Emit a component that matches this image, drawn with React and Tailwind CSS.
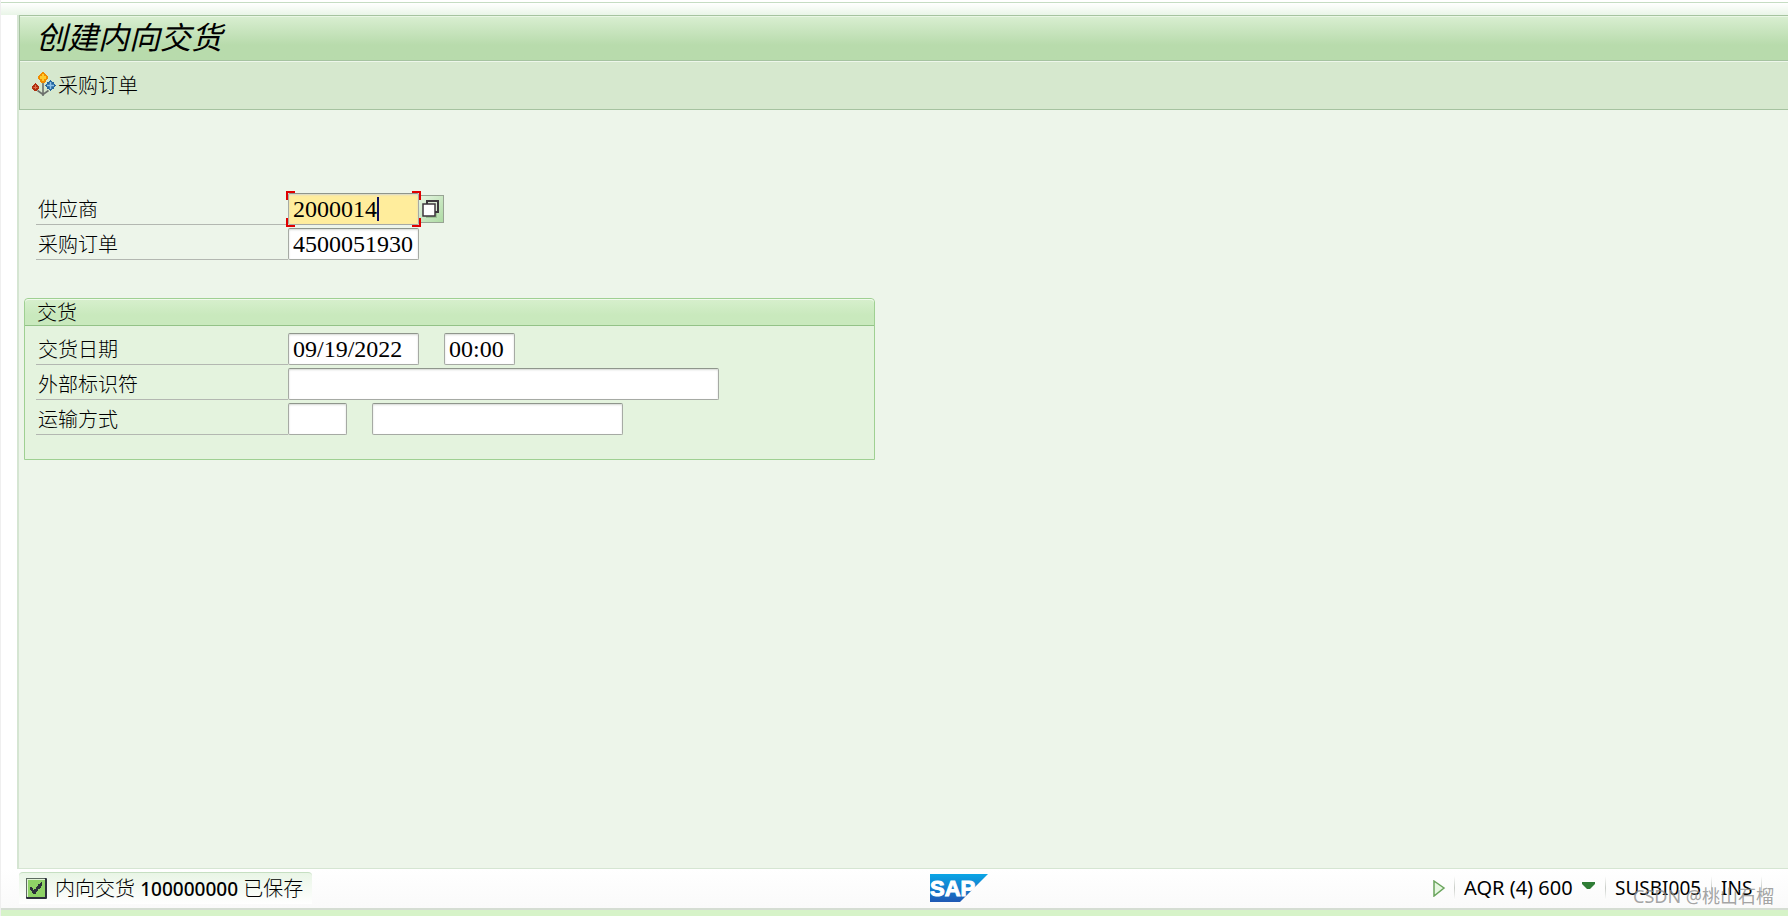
import React from "react";
import { useState } from "react";

const fieldStyle =
  "h-8 rounded-xs border border-[#a6aaa4] border-t-[#8f968c] pl-1 text-2xl leading-7 text-black outline-none shadow-[inset_0_1px_2px_#d5d8d4] font-['Liberation_Serif',serif]";

function OrderIcon() {
  return (
    <svg width="24" height="26" viewBox="0 0 24 26" fill="none">
      <path d="M11 11v13M5.500 18.500l5.500 4 5.500-4" stroke="#6b6f6b" strokeWidth="1.600" />
      <path d="M10 0h2v1h1v1h1v1h1v1h1v3h-1v1h-1v2h-1v1h-4v-1H8V8H7V7H6V4h1V3h1V2h1V1h1z" fill="#f08c00" />
      <path d="M10 2h2v2h2v3h-2v2h-2V7H8V4h2z" fill="#ffca2c" />
      <path d="M3 11h1v1h1v1h1v1h1v3H6v1H5v1H2v-1H1v-1H0v-3h1v-1h1v-1h1z" fill="#b0300f" />
      <path d="M3.500 13v4M1.500 15.500h4" stroke="#e0724c" />
      <path d="M18 8h1v1h1v1h2v2h1v1h1v1h-1v1h-1v2h-2v1h-1v1h-1v-1h-1v-1h-2v-2h-1v-1h-1v-1h1v-1h1v-2h2V9h1z" fill="#2466a0" />
      <path d="M18.500 10v7M15 13.500h7" stroke="#8fc2e8" strokeWidth="1.500" />
    </svg>
  );
}

function MatchIcon() {
  return (
    <svg width="18" height="19" viewBox="0 0 18 19" fill="none">
      <path d="M4 7h11v11H4z" fill="#9cc294" />
      <path d="M5 1h11v11H5z" fill="#dcebd7" stroke="#3c363c" strokeWidth="2" />
      <rect x="1" y="4" width="12" height="12" fill="#fff" stroke="#3c363c" strokeWidth="1.500" />
    </svg>
  );
}

function CheckIcon() {
  return (
    <svg width="21" height="21" viewBox="0 0 21 21">
      <rect width="21" height="21" rx="1" fill="#2c303c" />
      <rect width="19" height="19" rx="1" fill="#5d6b60" />
      <rect x="1" y="1" width="18" height="18" fill="#e2f3d8" />
      <rect x="2" y="2" width="17" height="17" fill="#8ed266" />
      <path d="M4 9h2v1h1v2h1v-1h2V9h1V8h1V6h2V5h1V4h1v4h-1v2h-1v1h-2v2h-1v1h-1v2H7v-1H6v-2H5v-1H4z" fill="#2c303c" />
    </svg>
  );
}

function SapLogo() {
  return (
    <svg width="58" height="28" viewBox="0 0 58 28">
      <defs>
        <linearGradient id="sap" x1="0" y1="0" x2="0" y2="1">
          <stop offset="0" stopColor="#0aa6e6" />
          <stop offset="1" stopColor="#1f58b4" />
        </linearGradient>
      </defs>
      <path d="M0 0h58L30 28H0z" fill="url(#sap)" />
      <text
        x="0"
        y="22"
        fontFamily="Liberation Sans, sans-serif"
        fontWeight="700"
        fontSize="22"
        fill="#fff"
        stroke="#fff"
        strokeWidth="1"
      >
        SAP
      </text>
    </svg>
  );
}

function Row({ id, label, children }) {
  return (
    <div className="flex h-8">
      <label
        htmlFor={id}
        className="flex w-[252px] shrink-0 items-center border-b border-[#b3b7b1] pl-[2px] text-xl leading-6"
      >
        {label}
      </label>
      {children}
    </div>
  );
}

function Divider() {
  return <div className="h-6 w-px bg-linear-to-b from-white via-[#c9cdc8] to-white"></div>;
}

export default function App() {
  const [form, setForm] = useState({
    vendor: "2000014",
    order: "4500051930",
    date: "09/19/2022",
    time: "00:00",
    external: "",
    transport: "",
    transportText: "",
  });

  const onChange = (e) => {
    setForm({ ...form, [e.target.id]: e.target.value });
  };

  return (
    <div className="flex min-h-screen flex-col border-l border-[#efefef] bg-white font-light text-black font-['Noto_Sans_CJK_SC',sans-serif]">
      <div className="mt-[2px] h-[13px] border-t border-[#c5dcc2] bg-linear-to-b from-white to-[#e9f5e7]"></div>

      <div className="ml-4 flex grow flex-col border-b border-l-2 border-[#d5e5d2] bg-[#edf5ea]">
        <header className="border-t border-l border-[#a6c3a0]">
          <div className="flex h-[45px] items-center border-t border-b border-t-[#e9f7e4] border-b-[#a6c3a0] bg-linear-to-b from-[#d8eed0] to-[#b8dbac] to-65% pb-[6px] pl-4">
            <h1 className="text-[31px] leading-9 font-normal italic">创建内向交货</h1>
          </div>
          <div className="flex h-[49px] items-center border-t border-b border-t-[#edf6ea] border-b-[#a6c3a0] bg-[#d6e8ce] pb-[2px] pl-3">
            <button className="flex items-center gap-[2px] text-xl leading-6">
              <OrderIcon />
              采购订单
            </button>
          </div>
        </header>

        <main className="grow pt-[83px] pl-[5px]">
          <div className="flex flex-col gap-[3px] pl-3">
            <Row id="vendor" label="供应商">
              <div className="relative">
                <input
                  id="vendor"
                  value={form.vendor}
                  onChange={onChange}
                  className={`${fieldStyle} w-[131px] bg-[#ffed9c]`}
                />
                <span className="absolute top-1 left-[89px] h-6 w-[2px] bg-[#0c1060]"></span>
                <span className="absolute -top-[2px] -left-[2px] h-[9px] w-[9px] border-t-2 border-l-2 border-[#e00000]"></span>
                <span className="absolute -top-[2px] -right-[2px] h-[9px] w-[9px] border-t-2 border-r-2 border-[#e00000]"></span>
                <span className="absolute -bottom-[2px] -left-[2px] h-[9px] w-[9px] border-b-2 border-l-2 border-[#e00000]"></span>
                <span className="absolute -right-[2px] -bottom-[2px] h-[9px] w-[9px] border-r-2 border-b-2 border-[#e00000]"></span>
              </div>
              <button
                aria-label="搜索帮助"
                className="mt-[2px] flex h-7 w-[25px] items-center border border-l-0 border-[#98a494] bg-linear-to-br from-[#e6f4e2] to-[#aedba4] pl-[3px]"
              >
                <MatchIcon />
              </button>
            </Row>
            <Row id="order" label="采购订单">
              <input
                id="order"
                value={form.order}
                onChange={onChange}
                className={`${fieldStyle} w-[131px] bg-white`}
              />
            </Row>
          </div>

          <section className="mt-[38px] h-[162px] w-[851px] rounded-t-sm border border-[#9fd092] bg-[#e4f3de]">
            <h2 className="flex h-[27px] items-center rounded-t-sm border-t border-b border-t-[#f0faec] border-b-[#93c287] bg-linear-to-b from-[#d6efcc] to-[#c9e9bd] to-60% pb-[2px] pl-3 text-xl leading-6 font-light">
              交货
            </h2>
            <div className="flex flex-col gap-[3px] pt-[7px] pl-[11px]">
              <Row id="date" label="交货日期">
                <input
                  id="date"
                  value={form.date}
                  onChange={onChange}
                  className={`${fieldStyle} w-[131px] bg-white`}
                />
                <input
                  id="time"
                  aria-label="交货时间"
                  value={form.time}
                  onChange={onChange}
                  className={`${fieldStyle} ml-[25px] w-[71px] bg-white`}
                />
              </Row>
              <Row id="external" label="外部标识符">
                <input
                  id="external"
                  value={form.external}
                  onChange={onChange}
                  className={`${fieldStyle} w-[431px] bg-white`}
                />
              </Row>
              <Row id="transport" label="运输方式">
                <input
                  id="transport"
                  value={form.transport}
                  onChange={onChange}
                  className={`${fieldStyle} w-[59px] bg-white`}
                />
                <input
                  id="transportText"
                  aria-label="运输方式说明"
                  value={form.transportText}
                  onChange={onChange}
                  className={`${fieldStyle} ml-[25px] w-[251px] bg-white`}
                />
              </Row>
            </div>
          </section>
        </main>
      </div>

      <footer className="relative flex h-[39px] items-center bg-linear-to-b from-white to-[#fafafa] pb-px font-['Noto_Sans','Noto_Sans_CJK_SC',sans-serif]">
        <div className="w-[52%] pl-[18px]">
          <div className="flex h-8 w-[293px] items-center rounded-t-sm border-t border-[#c6dfc2] bg-linear-to-b from-[#e9f5e6] to-white pl-[7px]">
            <CheckIcon />
            <p className="pl-2 text-xl leading-6 whitespace-nowrap">
              内向交货 <span className="text-[19px] font-medium">100000000</span> 已保存
            </p>
          </div>
        </div>
        <SapLogo />
        <div className="ml-auto flex items-center pr-[26px] text-[19px] leading-6 font-normal">
          <button aria-label="展开" className="mr-2">
            <svg width="13" height="17" viewBox="0 0 13 17">
              <path d="M1 1l10 7L1 16z" fill="#e6f7e0" stroke="#69a45c" strokeWidth="1.500" />
            </svg>
          </button>
          <Divider />
          <button className="flex w-[150px] items-center justify-between pr-[10px] pl-[9px] text-xl leading-6">
            AQR (4) 600
            <svg width="13" height="8" viewBox="0 0 13 8" className="mb-1">
              <path d="M0 0h13v2L8 7H5L0 2z" fill="#2f7d36" />
            </svg>
          </button>
          <Divider />
          <span className="w-[105px] pl-[9px]">SUSBI005</span>
          <Divider />
          <span className="w-[49px] pl-[9px]">INS</span>
          <Divider />
        </div>
        <span className="absolute right-[14px] bottom-0 text-lg leading-6 font-normal text-[#8c8c8c]/80">
          CSDN @桃山石榴
        </span>
      </footer>
      <div className="h-2 border-t-2 border-[#d5ddd3] bg-[#d6f3c8]"></div>
    </div>
  );
}
